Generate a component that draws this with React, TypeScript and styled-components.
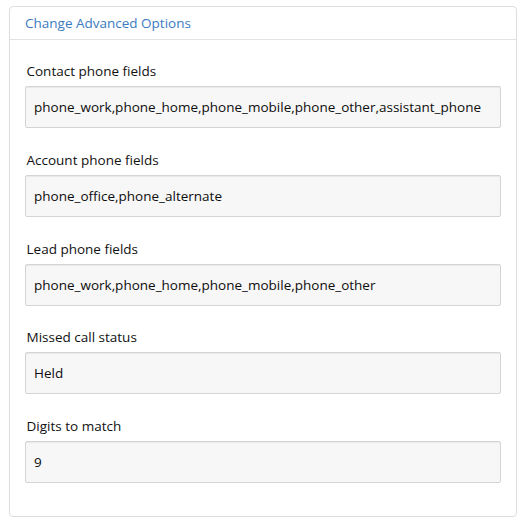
import React from "react";
import styled, { createGlobalStyle } from "styled-components";

const GlobalStyle = createGlobalStyle`
  html, body {
    margin: 0;
    padding: 0;
    background: #ffffff;
  }
  body {
    font-family: "Open Sans", "Liberation Sans", Arial, sans-serif;
    font-size: 13.5px;
    color: #111;
  }
`;

const Page = styled.div`
  padding: 6px 9px 9px 9px;
`;

const Panel = styled.section`
  border: 1px solid #dedede;
  border-radius: 4px;
  background: #ffffff;
`;

const PanelHeader = styled.header`
  height: 32px;
  display: flex;
  align-items: center;
  padding: 0 15px;
  border-bottom: 1px solid #e3e3e3;
`;

const PanelTitle = styled.h3`
  margin: 0;
  font-size: 13.5px;
  font-weight: 400;
  color: #3b7bbf;
  line-height: 20px;
`;

const PanelBody = styled.div`
  padding: 21px 15px 11px 15px;
  display: flex;
  flex-direction: column;
`;

const FieldGroup = styled.div`
  display: flex;
  flex-direction: column;
  margin-bottom: 21.75px;
`;

const FieldLabel = styled.label`
  font-size: 13.5px;
  line-height: 20px;
  color: #111;
  margin-bottom: 5px;
  padding-left: 1.5px;
`;

const FieldInput = styled.input`
  box-sizing: border-box;
  height: 42px;
  width: 100%;
  padding: 0 8px;
  font-family: "Open Sans", "Liberation Sans", Arial, sans-serif;
  font-size: 13.5px;
  color: #0d0d0d;
  background: #f7f7f7;
  border: 1px solid #d4d4d4;
  border-radius: 2px;
  box-shadow: inset 0 1px 1px rgba(0, 0, 0, 0.06);
  outline: none;
`;

const fields = [
  { label: "Contact phone fields", value: "phone_work,phone_home,phone_mobile,phone_other,assistant_phone" },
  { label: "Account phone fields", value: "phone_office,phone_alternate" },
  { label: "Lead phone fields", value: "phone_work,phone_home,phone_mobile,phone_other" },
  { label: "Missed call status", value: "Held" },
  { label: "Digits to match", value: "9" },
];

export default function App() {
  return (
    <>
      <GlobalStyle />
      <Page>
        <Panel>
          <PanelHeader>
            <PanelTitle>Change Advanced Options</PanelTitle>
          </PanelHeader>
          <PanelBody>
            {fields.map((f) => (
              <FieldGroup key={f.label}>
                <FieldLabel>{f.label}</FieldLabel>
                <FieldInput type="text" defaultValue={f.value} readOnly />
              </FieldGroup>
            ))}
          </PanelBody>
        </Panel>
      </Page>
    </>
  );
}
